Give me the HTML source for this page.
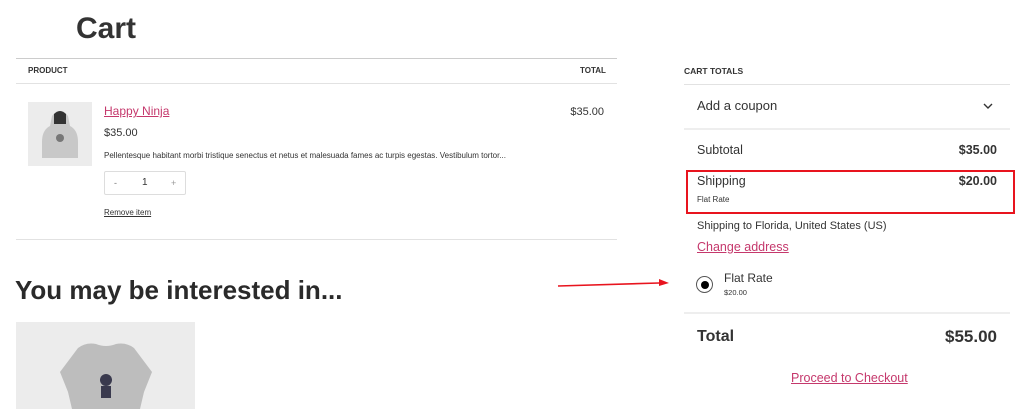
<!DOCTYPE html>
<html><head><meta charset="utf-8"><style>
body{margin:0;width:1024px;height:409px;overflow:hidden;background:#fff;font-family:"Liberation Sans",sans-serif;color:#333;position:relative}
.a{position:absolute;white-space:nowrap;line-height:1}
.ln{position:absolute;height:1px;background:#e2e2e2}
.pk{color:#c5386c;text-decoration:underline}
</style></head><body>
<div class="a" style="left:76px;top:14px;font-size:30px;font-weight:bold">Cart</div>
<div class="ln" style="left:16px;top:58px;width:601px;background:#ccc"></div>
<div class="a" style="left:28px;top:67px;font-size:8px;font-weight:bold">PRODUCT</div>
<div class="a" style="left:580px;top:67px;font-size:8px;font-weight:bold">TOTAL</div>
<div class="ln" style="left:16px;top:83px;width:601px"></div>
<div class="a" style="left:28px;top:102px;width:64px;height:64px;background:#ececec">
<svg width="64" height="64"><path d="M24 14 Q32 4 40 14 L42 24 Q50 28 50 40 L50 56 L14 56 L14 40 Q14 28 22 24 Z" fill="#c8c8c8"/><path d="M26 12 Q32 6 38 12 L38 22 L26 22Z" fill="#333"/><circle cx="32" cy="36" r="4" fill="#777"/></svg></div>
<div class="a pk" style="left:104px;top:105px;font-size:12px">Happy Ninja</div>
<div class="a" style="left:104px;top:128px;font-size:11px">$35.00</div>
<div class="a" style="top:107px;font-size:11px;right:420px">$35.00</div>
<div class="a" style="left:104px;top:152px;font-size:8px">Pellentesque habitant morbi tristique senectus et netus et malesuada fames ac turpis egestas. Vestibulum tortor...</div>
<div class="a" style="left:104px;top:171px;width:80px;height:22px;border:1px solid #ddd;border-radius:2px"></div>
<div class="a" style="left:114px;top:179px;font-size:9px;color:#777">-</div>
<div class="a" style="left:142px;top:178px;font-size:10px">1</div>
<div class="a" style="left:171px;top:179px;font-size:9px;color:#999">+</div>
<div class="a" style="left:104px;top:209px;font-size:8px;text-decoration:underline">Remove item</div>
<div class="ln" style="left:16px;top:239px;width:601px"></div>
<div class="a" style="left:15px;top:277px;font-size:26px;font-weight:bold;color:#2a2a2a">You may be interested in...</div>
<div class="a" style="left:16px;top:322px;width:179px;height:87px;background:#ececec">
<svg width="179" height="87"><path d="M62 26 Q70 20 80 22 Q90 26 100 22 Q110 20 118 26 L136 50 L128 70 L124 87 L56 87 L52 70 L44 50 Z" fill="#bdbdbd"/><circle cx="90" cy="58" r="6" fill="#3a3a4e"/><rect x="85" y="64" width="10" height="12" fill="#3a3a4e"/></svg></div>
<div class="a" style="left:684px;top:67px;font-size:8.5px;font-weight:bold">CART TOTALS</div>
<div class="ln" style="left:684px;top:84px;width:326px"></div>
<div class="a" style="left:697px;top:99px;font-size:13px">Add a coupon</div>
<svg class="a" style="left:983px;top:102px" width="10" height="8"><path d="M1 2 L5 6 L9 2" fill="none" stroke="#333" stroke-width="1.4"/></svg>
<div class="ln" style="left:684px;top:128px;width:326px;height:2px;background:#eee"></div>
<div class="a" style="left:697px;top:144px;font-size:12.5px">Subtotal</div>
<div class="a" style="right:27px;top:144px;font-size:12.5px;font-weight:bold">$35.00</div>
<div class="a" style="left:686px;top:170px;width:325px;height:40px;border:2px solid #e8141e"></div>
<div class="a" style="left:697px;top:175px;font-size:12.5px">Shipping</div>
<div class="a" style="right:27px;top:175px;font-size:12.5px;font-weight:bold">$20.00</div>
<div class="a" style="left:697px;top:196px;font-size:8px">Flat Rate</div>
<div class="a" style="left:697px;top:221px;font-size:11px">Shipping to Florida, United States (US)</div>
<div class="a pk" style="left:697px;top:241px;font-size:12.5px">Change address</div>
<div class="a" style="left:696px;top:276px;width:15px;height:15px;border:1.5px solid #555;border-radius:50%"></div>
<div class="a" style="left:701px;top:281px;width:8px;height:8px;background:#000;border-radius:50%"></div>
<div class="a" style="left:724px;top:272px;font-size:12px">Flat Rate</div>
<div class="a" style="left:724px;top:289px;font-size:7.5px">$20.00</div>
<div class="ln" style="left:684px;top:312px;width:326px;height:2px;background:#eee"></div>
<div class="a" style="left:697px;top:329px;font-size:16px;font-weight:bold">Total</div>
<div class="a" style="right:27px;top:328px;font-size:17px;font-weight:bold">$55.00</div>
<div class="a pk" style="left:791px;top:372px;font-size:12.5px">Proceed to Checkout</div>
<svg class="a" style="left:555px;top:276px" width="120" height="16"><path d="M3 10 L104 7" stroke="#e8141e" stroke-width="1.6"/><path d="M104 3 L114 7 L104 10Z" fill="#e8141e"/></svg>
</body></html>
